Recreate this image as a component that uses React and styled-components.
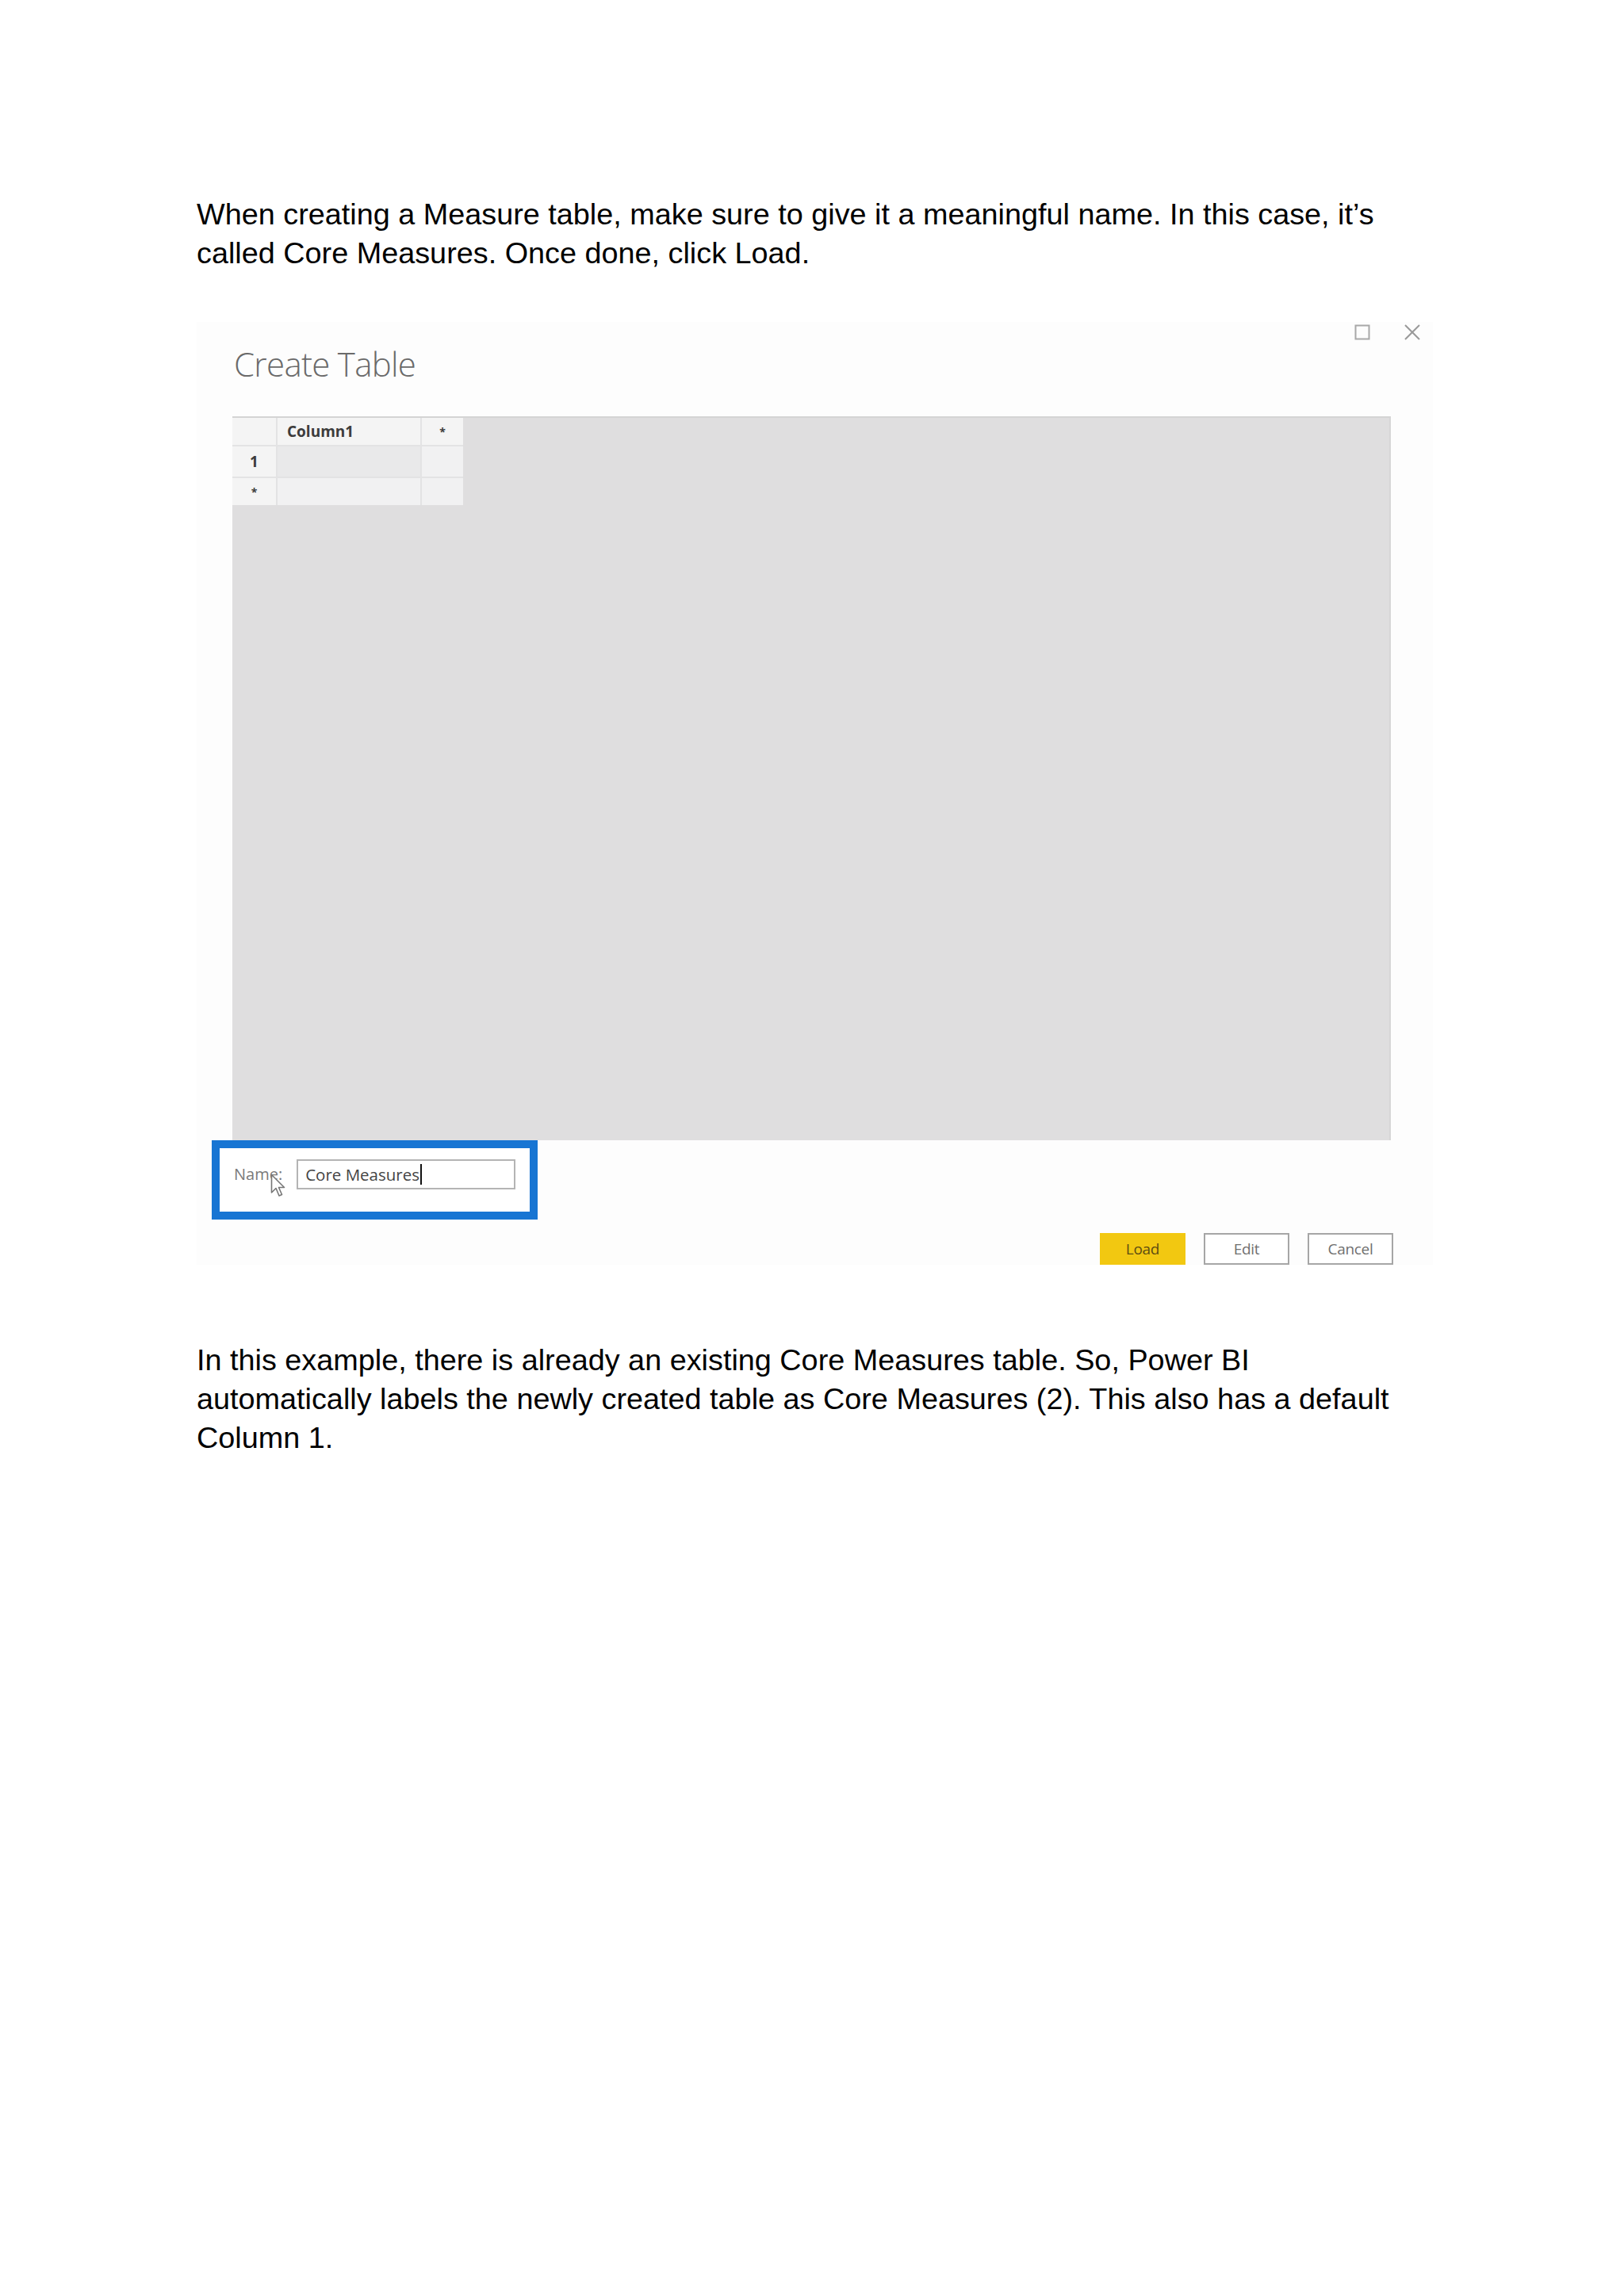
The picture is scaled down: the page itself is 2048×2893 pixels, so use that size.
import styled, { createGlobalStyle } from "styled-components";

const Global = createGlobalStyle`
	html, body {
		margin: 0;
		padding: 0;
		background: #ffffff;
	}
	body {
		font-family: "Liberation Sans", Arial, sans-serif;
		color: #000;
	}
`;

const Page = styled.div`
	width: 2048px;
	height: 2893px;
	padding: 246px 0 0 248px;
	box-sizing: border-box;
	background: #fff;
	overflow: hidden;
`;

const Para = styled.p`
	width: 1530px;
	margin: 0;
	margin-top: ${(p) => p.$top || 0}px;
	font-family: "Liberation Sans", Arial, sans-serif;
	font-size: 37.8px;
	line-height: 49px;
	color: #000;
`;

const Figure = styled.div`
	width: 1559px;
	margin-top: 62px;
	padding: 0 50px 0 45px;
	box-sizing: border-box;
	background: #fdfdfd;
	display: flex;
	flex-direction: column;
	font-family: "Open Sans", "Noto Sans", sans-serif;
`;

const WindowBar = styled.div`
	height: 26px;
	display: flex;
	justify-content: flex-end;
	align-items: center;
	gap: 42px;
	margin-right: -35px;
`;

const Title = styled.h1`
	margin: 6px 0 0 2px;
	font-family: "Open Sans", "Noto Sans", sans-serif;
	font-weight: 300;
	font-size: 42px;
	line-height: 42px;
	letter-spacing: -0.7px;
	color: #6a6a6a;
`;

const Canvas = styled.div`
	margin-top: 45px;
	width: 1461px;
	height: 913px;
	background: #dfdedf;
	border-top: 2px solid #d4d4d4;
	border-right: 2px solid #d6d6d6;
	box-sizing: border-box;
	display: flex;
	align-items: flex-start;
`;

const Grid = styled.div`
	display: grid;
	grid-template-columns: 55px 180px 52px;
	grid-template-rows: 34px 38px 34px;
	gap: 2px;
	background: #e3e3e4;
`;

const Cell = styled.div`
	background: ${(p) => p.$bg || "#f4f4f4"};
	display: flex;
	align-items: center;
	justify-content: ${(p) => (p.$center ? "center" : "flex-start")};
	padding-left: ${(p) => (p.$center ? 0 : 12)}px;
	font-family: "Open Sans", "Noto Sans", sans-serif;
	font-weight: 700;
	font-size: ${(p) => (p.$small ? 14 : 19)}px;
	color: #3c3c3c;
`;

const NameBox = styled.div`
	position: relative;
	margin-left: -26px;
	width: 411px;
	height: 100px;
	border: 10px solid #1775d3;
	box-sizing: border-box;
	background: #fff;
	display: flex;
	align-items: flex-start;
	padding: 14px 0 0 18px;
	gap: 18px;
`;

const Label = styled.span`
	font-size: 20px;
	line-height: 38px;
	color: #7a7a7a;
`;

const Input = styled.div`
	width: 276px;
	height: 38px;
	border: 2px solid #b4b4b4;
	box-sizing: border-box;
	background: #fff;
	display: flex;
	align-items: center;
	padding-left: 9px;
	font-size: 20.5px;
	color: #444;
`;

const Caret = styled.span`
	display: inline-block;
	width: 2px;
	height: 26px;
	background: #111;
	margin-left: 1px;
`;

const Pointer = styled.svg`
	position: absolute;
	left: 64px;
	top: 32px;
`;

const ButtonRow = styled.div`
	margin-top: 17px;
	width: 1464px;
	display: flex;
	justify-content: flex-end;
	gap: 23px;
`;

const Button = styled.div`
	width: 108px;
	height: 40px;
	box-sizing: border-box;
	display: flex;
	align-items: center;
	justify-content: center;
	font-size: 19px;
	letter-spacing: -0.3px;
	background: ${(p) => (p.$primary ? "#f2c811" : "#fff")};
	border: 2px solid ${(p) => (p.$primary ? "#f2c811" : "#a6a6a6")};
	color: ${(p) => (p.$primary ? "#5e4d12" : "#707070")};
`;

const App = () => {
	return (
		<Page>
			<Global />
			<Para>
				When creating a Measure table, make sure to give it a meaningful name. In this case, it’s
				called Core Measures. Once done, click Load.
			</Para>

			<Figure>
				<WindowBar>
					<svg width="20" height="20" viewBox="0 0 20 20">
						<rect x="1.5" y="1.5" width="17" height="17" fill="none" stroke="#a8a8a8" strokeWidth="2" />
					</svg>
					<svg width="22" height="22" viewBox="0 0 22 22">
						<path d="M2 2 L20 20 M20 2 L2 20" stroke="#9a9a9a" strokeWidth="2" />
					</svg>
				</WindowBar>
				<Title>Create Table</Title>

				<Canvas>
					<Grid>
						<Cell />
						<Cell>Column1</Cell>
						<Cell $center $small>*</Cell>
						<Cell $center>1</Cell>
						<Cell $bg="#e9e9ea" />
						<Cell $bg="#f1f1f2" />
						<Cell $center $small>*</Cell>
						<Cell $bg="#f1f1f2" />
						<Cell $bg="#f1f1f2" />
					</Grid>
				</Canvas>

				<NameBox>
					<Label>Name:</Label>
					<Input>
						Core Measures
						<Caret />
					</Input>
					<Pointer width="22" height="32" viewBox="0 0 22 32">
						<path
							d="M1.5 1.5 L1.5 24 L7 18.5 L11 28 L14.5 26.5 L10.5 17.5 L17.5 17.5 Z"
							fill="#fff"
							stroke="#777"
							strokeWidth="1.6"
							strokeLinejoin="round"
						/>
					</Pointer>
				</NameBox>

				<ButtonRow>
					<Button $primary>Load</Button>
					<Button>Edit</Button>
					<Button>Cancel</Button>
				</ButtonRow>
			</Figure>

			<Para $top={96}>
				In this example, there is already an existing Core Measures table. So, Power BI
				automatically labels the newly created table as Core Measures (2). This also has a default
				Column 1.
			</Para>
		</Page>
	);
};

export default App;
